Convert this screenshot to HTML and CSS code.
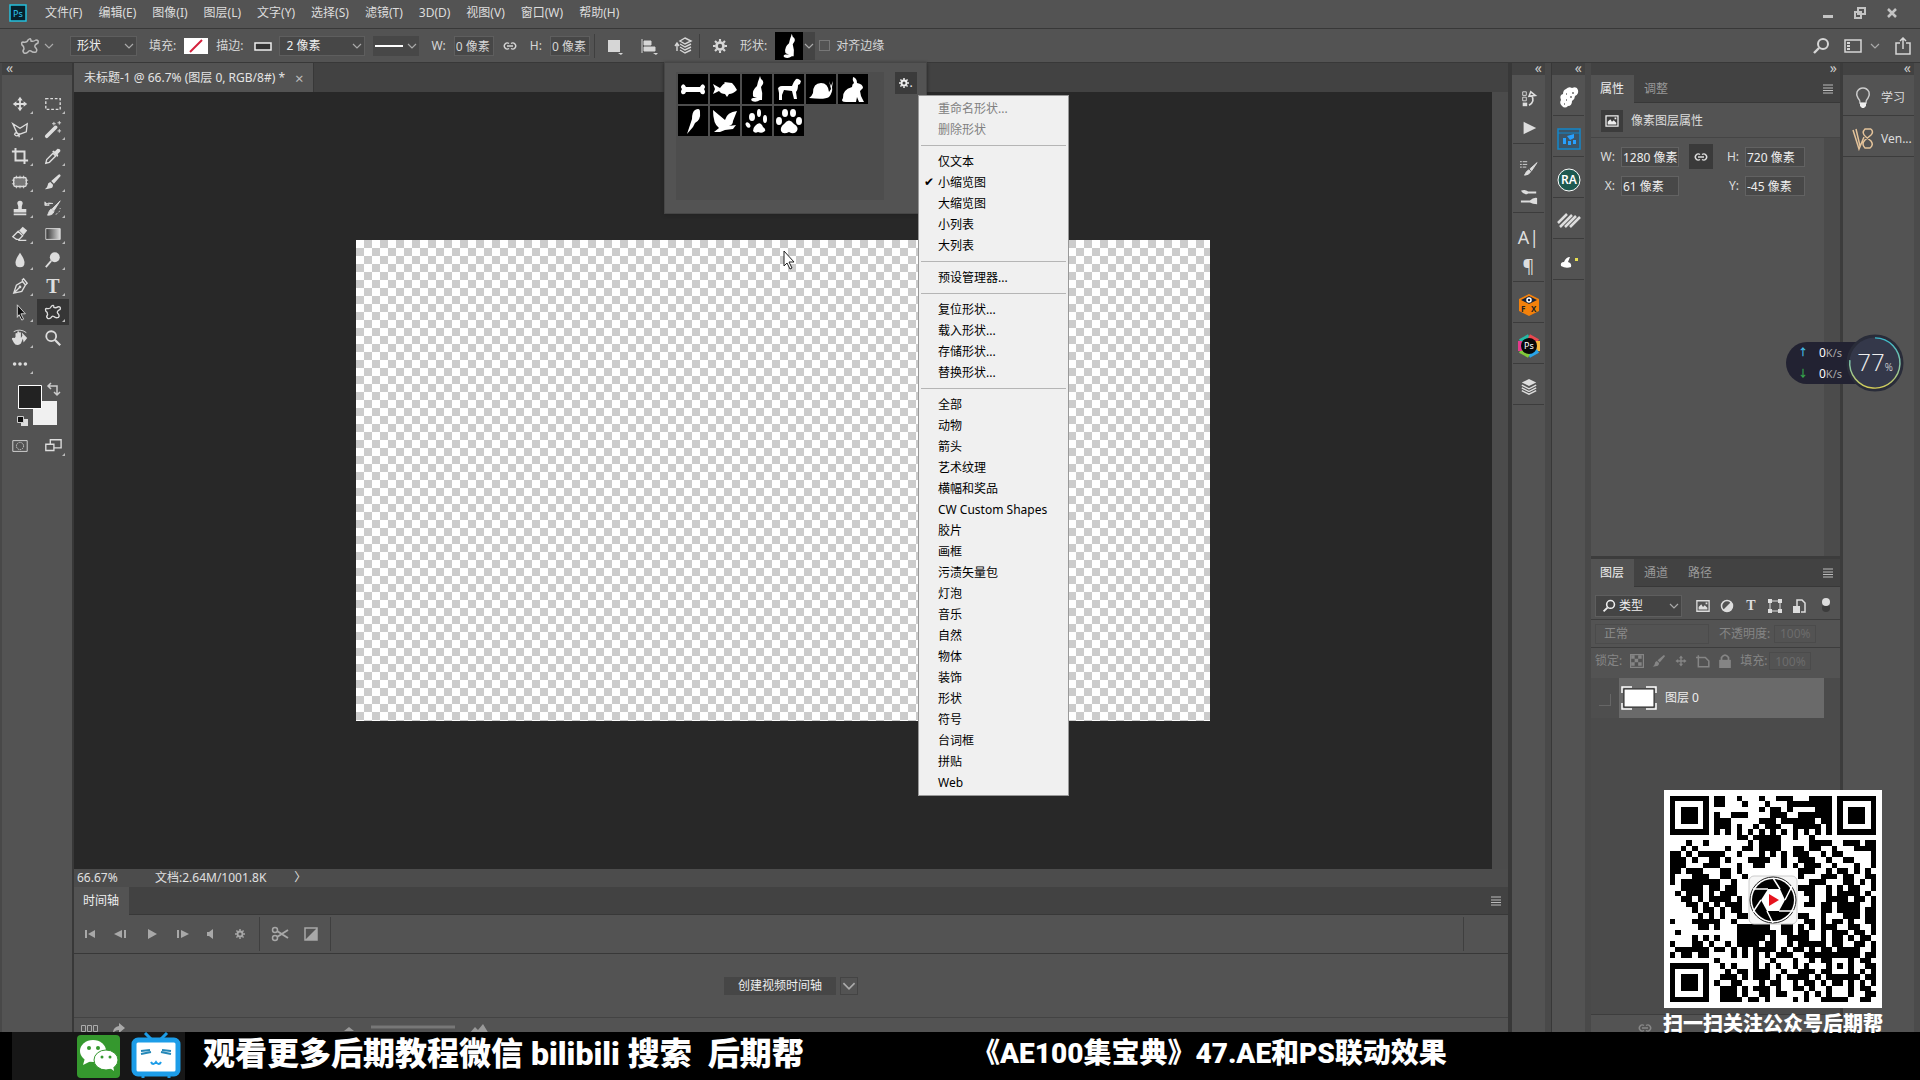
FILE: index.html
```html
<!DOCTYPE html>
<html lang="zh-CN">
<head>
  <meta charset="UTF-8">
  <meta name="viewport" content="width=device-width, initial-scale=1.0">
  <title>未标题-1 @ 66.7%</title>
  <link rel="stylesheet" href="styles.css">
</head>
<body>
  <!-- icons -->
  <svg class="defs" aria-hidden="true">
    <symbol id="i-star" viewBox="0 0 20 20"><path d="M8 4q3-3 3 1 2 1 5-1 3 0 2 3-4 2-3 4 3 3 1 5-3 1-5-1-2-1-3 1-2 2-4 1-2-2 0-4 0-3-2-4-1-3 1-3 4 1 5-2z" fill="none" stroke="currentColor" stroke-width="1.5"/></symbol>
    <symbol id="i-down" viewBox="0 0 10 10"><path d="M1 3l4 4 4-4" fill="none" stroke="#aaa" stroke-width="1.2"/></symbol>
    <symbol id="i-link" viewBox="0 0 16 10"><path d="M7 7.500a3 3 0 1 1 0-5M9 2.500a3 3 0 1 1 0 5M5 5h6" fill="none" stroke="currentColor" stroke-width="1.400"/></symbol>
    <symbol id="i-gear" viewBox="0 0 16 16"><circle cx="8" cy="8" r="4" fill="none" stroke="currentColor" stroke-width="3"/><path d="M8 0v3M8 13v3M0 8h3M13 8h3M2.300 2.300l2 2M11.700 11.700l2 2M13.700 2.300l-2 2M4.300 11.700l-2 2" stroke="currentColor" stroke-width="2.400"/></symbol>
    <symbol id="i-cat" viewBox="0 0 30 30"><path d="M18 2l1 3q3 2 2 5l-2 3q2 6 1 13h-2q-4 3-8 1-2-2 1-3h4q-4-1-4-2-1-6 4-10 1-5 2-7z" fill="#fff"/></symbol>
    <symbol id="i-search" viewBox="0 0 18 18"><circle cx="11" cy="7" r="5" fill="none" stroke="currentColor" stroke-width="2"/><path d="M7 11l-5 5" stroke="currentColor" stroke-width="2.400"/></symbol>
    <symbol id="i-brush" viewBox="0 0 20 20"><path d="M18 2q1 1 0 2l-7 8-3-3 8-7q1-1 2 0zM7 10l3 3q0 4-3 4-4 1-6 1 3-2 3-4 0-3 3-4z" fill="currentColor"/></symbol>
    <symbol id="i-move" viewBox="0 0 20 20"><path d="M10 2l3 4h-2v3h3V7l4 3-4 3v-2h-3v3h2l-3 4-3-4h2v-3H6v2l-4-3 4-3v2h3V6H7z" fill="currentColor"/></symbol>
    <symbol id="i-image" viewBox="0 0 16 14"><path d="M1 1h14v12H1z" fill="none" stroke="currentColor" stroke-width="1.500"/><path d="M3 11V8l3-3 2 3 2-2 3 3v2zM11 3h2v2h-2z" fill="currentColor"/></symbol>
    <symbol id="i-menu" viewBox="0 0 12 10"><path d="M1 1h10M1 4h10M1 6.500h10M1 9h10" stroke="currentColor"/></symbol>
  </svg>

  <div class="app">
    <header class="menubar">
      <svg class="ps-logo" viewBox="0 0 18 18"><rect x="1" y="1" width="16" height="16" fill="#06202c" stroke="#26c0dd" stroke-width="1.500"/><text x="4" y="13" font-size="9" fill="#31c5f0">Ps</text></svg>
      <nav>
        <a href="#">文件(F)</a><a href="#">编辑(E)</a><a href="#">图像(I)</a><a href="#">图层(L)</a><a href="#">文字(Y)</a><a href="#">选择(S)</a><a href="#">滤镜(T)</a><a href="#">3D(D)</a><a href="#">视图(V)</a><a href="#">窗口(W)</a><a href="#">帮助(H)</a>
      </nav>
      <div class="window-buttons">
        <button aria-label="最小化"><svg viewBox="0 0 12 12"><path d="M1 8h10v3H1z" fill="currentColor"/></svg></button>
        <button aria-label="还原"><svg viewBox="0 0 12 12"><path d="M4 1h7v6H4zM1 5h6v6H1z" fill="none" stroke="currentColor" stroke-width="2"/></svg></button>
        <button aria-label="关闭"><svg viewBox="0 0 12 12"><path d="M2 2l8 8M10 2l-8 8" stroke="currentColor" stroke-width="2.500"/></svg></button>
      </div>
    </header>

    <div class="options">
      <button class="tool-preset" aria-label="自定形状"><svg class="s20"><use href="#i-star"/></svg><svg class="s10"><use href="#i-down"/></svg></button>
      <span class="pick mode"><select aria-label="模式"><option>形状</option></select><svg class="s10"><use href="#i-down"/></svg></span>
      <span class="caption">填充:</span>
      <button class="swatch none" aria-label="填充"><svg viewBox="0 0 24 14"><path d="M6 13L18 1" stroke="#d4203c" stroke-width="2"/></svg></button>
      <span class="caption">描边:</span>
      <button class="swatch" aria-label="描边"><svg viewBox="0 0 24 14"><path d="M4 4h16v7H4z" fill="#333" stroke="#eee" stroke-width="1.500"/></svg></button>
      <span class="pick width"><input type="text" value="2 像素" aria-label="描边宽度"><svg class="s10"><use href="#i-down"/></svg></span>
      <button class="stroke-style" aria-label="描边类型"><i></i><svg class="s10"><use href="#i-down"/></svg></button>
      <label class="size">W:<input type="text" value="0 像素"></label>
      <svg class="link"><use href="#i-link"/></svg>
      <label class="size">H:<input type="text" value="0 像素"></label>
      <i class="bar"></i>
      <button class="opt" aria-label="路径操作"><svg viewBox="0 0 20 20"><path d="M3 4h12v12H3zM13 17h5l-2 2z" fill="currentColor"/></svg></button>
      <button class="opt" aria-label="对齐"><svg viewBox="0 0 20 20"><path d="M3 3v14M5 5h7v4H5zM5 11h11v4H5z" stroke="currentColor" fill="currentColor"/><path d="M14 17h5l-2 2z" fill="currentColor"/></svg></button>
      <button class="opt" aria-label="排列"><svg viewBox="0 0 20 20"><path d="M4 8v7M2 10l2-3 2 3M12 2l6 3-6 3-5-3zM7 8l5 3 6-3M7 11l5 3 6-3M7 14l5 3 6-3" stroke="currentColor" fill="none" stroke-width="1.400"/></svg></button>
      <i class="bar"></i>
      <button class="opt gear" aria-label="选项"><svg class="s14"><use href="#i-gear"/></svg></button>
      <span class="caption">形状:</span>
      <button class="shape-now" aria-label="当前形状"><svg><use href="#i-cat"/></svg></button>
      <button class="shape-arrow" aria-label="打开形状"><svg class="s10"><use href="#i-down"/></svg></button>
      <label class="check"><input type="checkbox">对齐边缘</label>
      <div class="options-right">
        <button aria-label="搜索"><svg class="s18"><use href="#i-search"/></svg></button>
        <button aria-label="工作区"><svg class="s18" viewBox="0 0 18 18"><path d="M1 3h16v12H1z" fill="none" stroke="currentColor" stroke-width="1.500"/><path d="M3 5h3v2H3zM3 8h3v2H3zM3 11h3v2H3z" fill="currentColor"/></svg><svg class="s10"><use href="#i-down"/></svg></button>
        <button aria-label="共享"><svg class="s18" viewBox="0 0 18 18"><path d="M6 6H2v11h14V6h-4M9 12V1M6 4l3-3 3 3" fill="none" stroke="currentColor" stroke-width="1.500"/></svg></button>
      </div>
    </div>

    <div class="work">
      <aside class="tools">
        <div class="strip left">«</div>
        <div class="tool-grid">
          <button aria-label="移动"><svg><use href="#i-move"/></svg></button>
          <button aria-label="矩形选框"><svg viewBox="0 0 20 20"><path d="M2 4h16v12H2z" fill="none" stroke="currentColor" stroke-width="1.500" stroke-dasharray="3 2"/></svg></button>
          <button aria-label="多边形套索"><svg viewBox="0 0 20 20"><path d="M7 14L2 3l8 5 8-5-1 9-8 3q-4-4-5 0 2 3 5 0v3" fill="none" stroke="currentColor" stroke-width="1.500"/></svg></button>
          <button aria-label="魔棒"><svg viewBox="0 0 20 20"><path d="M3 17L13 7" stroke="currentColor" stroke-width="4" stroke-linecap="round"/><path d="M11 1v4M9 3h4M17 0v4M15 2h4M17 9v4M15 11h4" stroke="currentColor"/></svg></button>
          <button aria-label="裁剪"><svg viewBox="0 0 20 20"><path d="M5 1v14h14M1 5h14v14" fill="none" stroke="currentColor" stroke-width="2.200"/></svg></button>
          <button aria-label="吸管"><svg viewBox="0 0 20 20"><path d="M2 18l1-4 7-7 3 3-7 7z" fill="none" stroke="currentColor" stroke-width="1.500"/><path d="M9 5l6 6 1-2-1-1 3-3q1-3-3-3l-3 3-1-1z" fill="currentColor"/></svg></button>
          <button aria-label="修补"><svg viewBox="0 0 20 20"><rect x="3" y="5" width="14" height="10" rx="2" fill="#777" stroke="currentColor" stroke-width="1.500"/><path d="M6 3v3M10 3v3M14 3v3M6 14v3M10 14v3M14 14v3M1 8h3M1 12h3M16 8h3M16 12h3" stroke="currentColor"/></svg></button>
          <button aria-label="画笔"><svg><use href="#i-brush"/></svg></button>
          <button aria-label="仿制图章"><svg viewBox="0 0 20 20"><path d="M10 2q3 0 3 3l-1 3v3h5v4H3v-4h5V8L7 5q0-3 3-3zM3 16h14v2H3z" fill="currentColor"/></svg></button>
          <button aria-label="历史记录画笔"><svg viewBox="0 0 20 20"><path d="M18 2L9 11l2 2zM8 11l3 3q-1 4-7 4 2-6 4-7zM1 7q4-4 9-2M1 3v4h5" fill="currentColor" stroke="currentColor"/><path d="M13 17q5-2 5-7" stroke="currentColor" stroke-dasharray="2 2" fill="none"/></svg></button>
          <button aria-label="橡皮擦"><svg viewBox="0 0 20 20"><path d="M9 6l4-4 5 4-4 5z" fill="currentColor"/><path d="M8 7l5 5-4 4H6l-4-3zM8 17h9" stroke="currentColor" stroke-width="1.500" fill="none"/></svg></button>
          <button aria-label="渐变"><svg viewBox="0 0 20 20"><defs><linearGradient id="gr"><stop stop-color="#333"/><stop offset="1" stop-color="#ddd"/></linearGradient></defs><path d="M2 4h16v12H2z" fill="url(#gr)" stroke="currentColor"/></svg></button>
          <button aria-label="模糊"><svg viewBox="0 0 20 20"><path d="M10 2q5 7 5 11 0 5-5 5t-5-5q0-4 5-11z" fill="currentColor"/></svg></button>
          <button aria-label="减淡"><svg viewBox="0 0 20 20"><circle cx="12" cy="7" r="5.500" fill="currentColor"/><path d="M8 11l-6 7" stroke="currentColor" stroke-width="2"/></svg></button>
          <button aria-label="钢笔"><svg viewBox="0 0 20 20"><path d="M3 18l3-9 7-4 3 4-4 7zM12 4l2-2 4 5-2 2M3 18l7-7" fill="none" stroke="currentColor" stroke-width="1.500"/><circle cx="10" cy="11" r="1.500" fill="currentColor"/></svg></button>
          <button class="type" aria-label="文字">T</button>
          <button aria-label="路径选择"><svg viewBox="0 0 20 20"><path d="M7 2l9 10h-5l3 6-2 1-3-6-2 3z" fill="#111" stroke="currentColor"/></svg></button>
          <button class="active" aria-label="自定形状"><svg><use href="#i-star"/></svg></button>
          <button aria-label="旋转视图"><svg viewBox="0 0 20 20"><path d="M5 9V5q1-1 2 0v4-6q1-1 2 0v6-5q1-1 2 0v6l2-3q2 0 1 2l-3 7q-5 4-8-1l-2-4q0-2 3-1zM12 4l6 6-4 5z" fill="currentColor"/><path d="M3 3q7-4 14 1" fill="none" stroke="currentColor"/></svg></button>
          <button class="plain" aria-label="缩放"><svg viewBox="0 0 20 20"><circle cx="8" cy="8" r="5.500" fill="none" stroke="currentColor" stroke-width="2"/><path d="M12 12l6 6" stroke="currentColor" stroke-width="2.500"/></svg></button>
          <button aria-label="更多"><svg viewBox="0 0 20 20"><circle cx="4" cy="10" r="2" fill="currentColor"/><circle cx="10" cy="10" r="2" fill="currentColor"/><circle cx="16" cy="10" r="2" fill="currentColor"/></svg></button>
        </div>
        <svg class="colours" viewBox="0 0 66 50"><path d="M31 21h24v24H31z" fill="#f0f0f0"/><path d="M16.500 5.500h23v23h-23z" fill="#222" stroke="#fff"/><path d="M46 6h9v9M49 3l-3 3 3 3M52 12l3 3 3-3" fill="none" stroke="#ccc" stroke-width="1.500"/><path d="M19 39h7v7h-7z" fill="#ddd"/><path d="M15.500 36.500h6v6h-6z" fill="#111" stroke="#ccc"/></svg>
        <div class="tool-grid">
          <button class="plain" aria-label="快速蒙版"><svg viewBox="0 0 20 20"><path d="M2 4h16v12H2z" fill="none" stroke="currentColor"/><circle cx="10" cy="10" r="4" fill="none" stroke="currentColor" stroke-dasharray="1.500 1"/></svg></button>
          <button aria-label="屏幕模式"><svg viewBox="0 0 20 20"><path d="M7 3h12v9H7z" fill="none" stroke="currentColor" stroke-width="1.500"/><path d="M2 8h9v7H2z" fill="#535353" stroke="currentColor" stroke-width="1.500"/></svg></button>
        </div>
      </aside>

      <main class="document">
        <div class="doc-tabs"><div class="doc-tab">未标题-1 @ 66.7% (图层 0, RGB/8#) *<button aria-label="关闭文档">×</button></div></div>
        <div class="stage"><div class="pasteboard"><div class="canvas"></div></div><div class="scroll"></div></div>
        <div class="status"><span class="zoom">66.67%</span><span>文档:2.64M/1001.8K</span><span class="next">〉</span></div>
        <section class="timeline">
          <div class="tabs"><button class="tab on">时间轴</button><button class="panel-menu" aria-label="面板菜单"><svg><use href="#i-menu"/></svg></button></div>
          <div class="transport">
            <button aria-label="转到第一帧"><svg viewBox="0 0 14 14"><path d="M2 3h2v8H2zM12 3v8L5 7z" fill="currentColor"/></svg></button>
            <button aria-label="上一帧"><svg viewBox="0 0 14 14"><path d="M8 3v8L0 7zM10 3h2v8h-2z" fill="currentColor"/></svg></button>
            <button aria-label="播放"><svg viewBox="0 0 14 14"><path d="M3 2l9 5-9 5z" fill="currentColor"/></svg></button>
            <button aria-label="下一帧"><svg viewBox="0 0 14 14"><path d="M1 3h2v8H1zM5 3l8 4-8 4z" fill="currentColor"/></svg></button>
            <button class="narrow" aria-label="静音"><svg viewBox="0 0 14 14"><path d="M3 5h2l4-3v10L5 9H3z" fill="currentColor"/></svg></button>
            <button class="cog" aria-label="设置"><svg><use href="#i-gear"/></svg></button>
            <i class="bar"></i>
            <button aria-label="拆分"><svg class="s18" viewBox="0 0 18 18"><path d="M6 6l11 7M6 12l11-7" stroke="currentColor" stroke-width="2"/><circle cx="4" cy="5" r="2.500" fill="none" stroke="currentColor" stroke-width="1.500"/><circle cx="4" cy="13" r="2.500" fill="none" stroke="currentColor" stroke-width="1.500"/></svg></button>
            <button aria-label="过渡"><svg viewBox="0 0 14 14"><path d="M1 1h12v12H1z" fill="none" stroke="currentColor" stroke-width="1.500"/><path d="M13 1v12H1z" fill="currentColor"/></svg></button>
            <i class="bar"></i>
            <i class="bar last"></i>
          </div>
          <div class="timeline-body"><button class="create">创建视频时间轴</button><button class="create-more" aria-label="更多"><svg class="s14"><use href="#i-down"/></svg></button></div>
          <div class="timeline-foot">
            <svg viewBox="0 0 360 14"><path d="M2.500 3.500h4v6h-4zM8.500 3.500h4v6h-4zM14.500 3.500h4v6h-4z" fill="none" stroke="#aaa"/><path d="M34 11q0-6 6-7V1l6 5-6 5V8q-4 0-6 3z" fill="#aaa"/><path d="M265 9l5-4 5 4z" fill="#999"/><path d="M292 5h84" stroke="#777" stroke-width="3"/></svg>
            <svg class="mountain" viewBox="0 0 20 14"><path d="M0 12l6-7 3 3 5-6 6 10z" fill="#999"/></svg>
          </div>
        </section>
      </main>

      <aside class="dock">
        <div class="strip">«</div>
        <div class="group">
          <button aria-label="历史记录"><svg viewBox="0 0 20 20"><path d="M3 2h4v4H3zM3 8h4v4H3z" fill="none" stroke="currentColor"/><path d="M3 14h5v4H3z" fill="currentColor"/><path d="M10 17q7-4 3-11M10 7l2-5 5 4z" fill="none" stroke="currentColor" stroke-width="1.800"/></svg></button>
          <button aria-label="动作"><svg viewBox="0 0 20 20"><path d="M4 3l14 7-14 7z" fill="currentColor"/></svg></button>
        </div>
        <div class="group">
          <button aria-label="画笔设置"><svg viewBox="0 0 20 20"><path d="M0 3h2M0 6h2M0 9h2M3 3h5M3 6h5M3 9h4" stroke="currentColor"/><path d="M19 4l-8 7 2 2zM10 12l2 2q-2 4-7 4 2-5 5-6z" fill="currentColor" stroke="currentColor"/></svg></button>
          <button aria-label="画笔"><svg viewBox="0 0 20 20"><path d="M1 3q5-2 8 1h9v2H9q-4 3-8-3zM1 14h10q4-4 8-3v7q-5 0-8-2H1z" fill="currentColor"/></svg></button>
        </div>
        <div class="group">
          <button class="glyph" aria-label="字符">A|</button>
          <button class="glyph" aria-label="段落">¶</button>
        </div>
        <div class="group one"><button aria-label="FX"><svg class="s24" viewBox="0 0 24 24"><path d="M12 1l10 5v12l-10 5-10-5V6z" fill="#f4810b"/><path d="M4 7l8-4 8 4-8 4z" fill="#16233a"/><circle cx="12" cy="7" r="2" fill="#16233a" stroke="#fff" stroke-width="1.500"/><text x="4" y="19" font-size="8" font-weight="700" fill="#222">F</text><text x="14" y="19" font-size="8" font-weight="700" fill="#222">X</text></svg></button></div>
        <div class="group one"><button aria-label="Ps 插件"><svg class="s24" viewBox="0 0 24 24"><g fill="none" stroke-width="4"><path d="M3 7l9-5" stroke="#25b9a5"/><path d="M12 2l9 5" stroke="#e8484f"/><path d="M21 7v10" stroke="#f5b73b"/><path d="M21 17l-9 5" stroke="#29a4e8"/><path d="M12 22l-9-5" stroke="#82c83a"/><path d="M3 17V7" stroke="#e43a8c"/></g><circle cx="12" cy="12" r="8" fill="#080808"/><text x="7" y="15" font-size="9" fill="#fff">Ps</text></svg></button></div>
        <div class="group one"><button aria-label="图层"><svg viewBox="0 0 20 20"><path d="M10 1l8 4-8 4-8-4z" fill="currentColor"/><path d="M2 8l8 4 8-4M2 11l8 4 8-4M2 14l8 4 8-4" fill="none" stroke="currentColor" stroke-width="1.500"/></svg></button></div>
      </aside>

      <aside class="dock">
        <div class="strip">«</div>
        <div class="group one"><button aria-label="插件"><svg class="s24" viewBox="0 0 24 24"><path d="M9 3q3-3 6-1 5-2 6 2 1 4-3 6 0 3-3 5 0 5-4 5-3 3-6 0-3-3-1-6-2-5 2-6 0-4 3-5z" fill="#fff"/><path d="M9 8h1M15 7h2M9 14h1M7 18h1M13 11h2" stroke="#222"/></svg></button></div>
        <div class="group one"><button aria-label="插件"><svg class="s24" viewBox="0 0 24 24"><path d="M1 2h22v20H1z" fill="#3b5568" stroke="#1587c9" stroke-width="1.500"/><path d="M1 6h22" stroke="#1587c9"/><path d="M6 11h3v6H6zM10 9l7-2v4l-4 2zM11 14h3v4h-3zM16 13h3v4h-3z" fill="#27a0ff"/></svg></button></div>
        <div class="group one"><button aria-label="RA"><svg class="s24" viewBox="0 0 24 24"><circle cx="12" cy="12" r="11" fill="#1d5a50" stroke="#fff"/><text x="4" y="16" font-size="12" font-weight="600" fill="#fff">RA</text></svg></button></div>
        <div class="group one"><button aria-label="插件"><svg class="s24" viewBox="0 0 24 24"><path d="M1 14l9-9M3 18L15 6M8 18L19 7M13 18L23 8" stroke="#ddd" stroke-width="2.500"/></svg></button></div>
        <div class="group one"><button aria-label="插件"><svg class="s24" viewBox="0 0 24 24"><path d="M4 16q-1-4 3-4 2-5 6-5l-2 5q4 1 3 5-5 2-10-1z" fill="#fff"/><path d="M18 8h3v3h-3z" fill="#e8df50"/></svg></button></div>
      </aside>

      <aside class="panels">
        <div class="strip">»</div>
        <section class="properties">
          <div class="tabs"><button class="tab on">属性</button><button class="tab">调整</button><button class="panel-menu" aria-label="面板菜单"><svg><use href="#i-menu"/></svg></button></div>
          <div class="prop-title"><span class="thumb-icon"><svg><use href="#i-image"/></svg></span>像素图层属性</div>
          <div class="prop-body">
            <div class="fields">
              <label for="pw">W:</label><input id="pw" type="text" value="1280 像素"><button class="chain" aria-label="链接"><svg class="link"><use href="#i-link"/></svg></button><label for="ph">H:</label><input id="ph" type="text" value="720 像素">
              <label for="px">X:</label><input id="px" type="text" value="61 像素"><span></span><label for="py">Y:</label><input id="py" type="text" value="-45 像素">
            </div>
            <div class="scroll"></div>
          </div>
        </section>
        <section class="layers">
          <div class="tabs"><button class="tab on">图层</button><button class="tab">通道</button><button class="tab">路径</button><button class="panel-menu" aria-label="面板菜单"><svg><use href="#i-menu"/></svg></button></div>
          <div class="row filter">
            <span class="pick kind"><svg class="s12"><use href="#i-search"/></svg><select aria-label="类型"><option>类型</option></select><svg class="s10"><use href="#i-down"/></svg></span>
            <svg class="s12" viewBox="0 0 16 14"><use href="#i-image"/></svg>
            <svg class="s12" viewBox="0 0 14 14"><circle cx="7" cy="7" r="5.500" fill="none" stroke="currentColor" stroke-width="1.500"/><path d="M11 3a5.500 5.500 0 0 1-8 8z" fill="currentColor"/></svg>
            <b class="t">T</b>
            <svg class="s12" viewBox="0 0 14 14"><path d="M2 2h10v10H2z" fill="none" stroke="currentColor"/><path d="M0 0h4v4H0zM10 0h4v4h-4zM0 10h4v4H0zM10 10h4v4h-4z" fill="currentColor"/></svg>
            <svg class="s12" viewBox="0 0 14 14"><path d="M5 7V1h5l3 3v9H9" fill="none" stroke="currentColor" stroke-width="1.500"/><path d="M1 7h7v7H1z" fill="currentColor"/></svg>
            <i class="toggle"></i>
          </div>
          <div class="row blend"><select aria-label="混合模式" disabled><option>正常</option></select><label for="op">不透明度:</label><input id="op" value="100%" disabled></div>
          <div class="row lock">
            <span>锁定:</span>
            <svg class="s12" viewBox="0 0 12 12"><path d="M.5.500h11v11H.500z" fill="none" stroke="currentColor"/><path d="M1 1h3v3H1zM7 1h3v3H7zM4 4h3v3H4zM1 7h3v3H1zM7 7h3v3H7z" fill="currentColor"/></svg>
            <svg class="s12"><use href="#i-brush"/></svg>
            <svg class="s12"><use href="#i-move"/></svg>
            <svg class="s12" viewBox="0 0 12 12"><path d="M0 3h8l3 3v5H2V1" fill="none" stroke="currentColor" stroke-width="1.300"/></svg>
            <svg class="s12" viewBox="0 0 12 12"><path d="M1 5h10v7H1z" fill="currentColor"/><path d="M3 6V3q3-4 6 0v3" fill="none" stroke="currentColor" stroke-width="1.500"/></svg>
            <label for="fill">填充:</label><input id="fill" value="100%" disabled>
          </div>
          <div class="layer-list">
            <div class="eye"><i></i></div>
            <div class="layer"><svg viewBox="0 0 36 24"><path d="M3 3h30v18H3z" fill="#fff" stroke="#222"/><path d="M1 7V1h10M25 1h10v6M35 17v6H25M11 23H1v-6" fill="none" stroke="#fff" stroke-width="1.500"/></svg>图层 0</div>
            <div class="scroll"></div>
          </div>
          <div class="layer-foot"><svg class="link"><use href="#i-link"/></svg></div>
        </section>
      </aside>

      <aside class="learn">
        <div class="strip">«</div>
        <button><svg class="s24" viewBox="0 0 24 24"><path d="M9 17q0-3-2-5-2-3-1-6 2-4 6-4t6 4q1 3-1 6-2 2-2 5z" fill="none" stroke="#ccc" stroke-width="1.500"/><path d="M9 17h6v3l-2 2h-2l-2-2z" fill="#eee"/></svg>学习</button>
        <button><svg class="s24" viewBox="0 0 24 24"><path d="M2 3l6 19 5-12M5 2l4 17M20 2h-6q-4 4 1 8l5 4q3 4-1 7h-5q-4-4 0-8l6-5q3-3 0-6" fill="none" stroke="#e4c39a" stroke-width="1.500"/></svg>Ven...</button>
      </aside>
    </div>

    <footer class="banner">
      <div class="logos">
        <svg viewBox="0 0 44 44"><rect width="43" height="43" x="1" y="1" rx="4" fill="#35982e"/><ellipse cx="17" cy="17" rx="13" ry="11" fill="#fff"/><path d="M9 24l-2 7 8-4z" fill="#fff"/><ellipse cx="30" cy="26" rx="12" ry="10" fill="#fff" stroke="#35982e"/><path d="M34 34l4 3-1-6z" fill="#fff"/><g fill="#35982e"><circle cx="13" cy="14" r="2"/><circle cx="22" cy="14" r="2"/><circle cx="26" cy="23" r="1.500"/><circle cx="34" cy="23" r="1.500"/></g></svg>
        <svg class="tv" viewBox="0 0 50 48"><path d="M14 1l7 7M36 1l-7 7M12 43v3M38 43v3" stroke="#1d9de8" stroke-width="3"/><rect x="3" y="8" width="44" height="34" rx="4" fill="#fff" stroke="#1d9de8" stroke-width="5"/><path d="M10 22l10-2M30 20l10 2M10 19l9-1M31 18l9 1" stroke="#2588b8" stroke-width="2"/><path d="M20 30q2 4 5 0 3 4 5 0" fill="none" stroke="#1d9de8" stroke-width="2"/></svg>
      </div>
      <p class="promo">观看更多后期教程微信 bilibili 搜索&nbsp; 后期帮</p>
      <p class="episode">《AE100集宝典》47.AE和PS联动效果</p>
    </footer>
  </div>

  <!-- shape picker -->
  <div class="picker">
    <div class="shapes">
      <button aria-label="骨头"><svg viewBox="0 0 30 30"><path d="M4 11q2-2 4 2h14q2-4 4-2 2 2 0 4 2 3 0 5-3 1-4-2H8q-1 3-4 2-2-2 0-5-2-2 0-4z" fill="#fff"/></svg></button>
      <button aria-label="鱼"><svg viewBox="0 0 30 30"><path d="M3 10l7 4q3-4 5-5l-1-1 8 1q3 3 5 7-4 4-8 4l-2 3-2-3q-4 0-6-3l-6 3 2-5z" fill="#fff"/></svg></button>
      <button aria-label="猫"><svg><use href="#i-cat"/></svg></button>
      <button aria-label="狗"><svg viewBox="0 0 30 30"><path d="M3 17q1-5 5-5h10q2-5 4-7 2-1 5 2l-1 3-2 1q0 5-2 7l1 7h-3l-2-8-8-1-2 5v5H5v-7l-1-5z" fill="#fff"/></svg></button>
      <button aria-label="蜗牛"><svg viewBox="0 0 30 30"><path d="M3 24q3-2 4-5 0-10 8-10 7 0 8 9l2-3-2-8 2 5 2-5-1 6q1 5-3 10-4 3-20 1z" fill="#fff"/></svg></button>
      <button aria-label="兔"><svg viewBox="0 0 30 30"><path d="M15 3q4 1 4 6 6 1 6 5l-3 3 1 5 3 6h-5l-2-5-1 5H8q-6 0-3-4-1-8 9-11 0-3 2-4-2-3-1-6z" fill="#fff"/></svg></button>
      <button aria-label="鹦鹉"><svg viewBox="0 0 30 30"><path d="M17 4q5-3 5 2 1 8-5 11l-2 4-6 7 5-15q0-7 3-9z" fill="#fff"/></svg></button>
      <button aria-label="飞鸟"><svg viewBox="0 0 30 30"><path d="M3 4l12 10q2-8 12-9l-4 10q0 4-4 5l7-1-3 4-8 1-5 2H4l5-4q-6-4-6-18z" fill="#fff"/></svg></button>
      <button aria-label="爪印"><svg viewBox="0 0 30 30"><g fill="#fff"><path d="M13 20q5-6 8 1 3 2 2 4-3 3-7 1-3 2-5-1 0-3 2-5z"/><ellipse cx="6" cy="19" rx="2" ry="3" transform="rotate(-35 6 19)"/><ellipse cx="10" cy="11" rx="3" ry="4"/><ellipse cx="17" cy="7" rx="2" ry="4"/><ellipse cx="23" cy="13" rx="2" ry="4"/></g></svg></button>
      <button aria-label="爪印"><svg viewBox="0 0 30 30"><g fill="#fff"><path d="M10 18q5-7 10 0 5 3 3 7-3 4-8 1-6 3-8-1-1-4 3-7z"/><ellipse cx="5" cy="15" rx="3" ry="4"/><ellipse cx="11" cy="7" rx="3" ry="4"/><ellipse cx="19" cy="7" rx="3" ry="4"/><ellipse cx="25" cy="15" rx="3" ry="4"/></g></svg></button>
    </div>
    <button class="picker-gear" aria-label="形状菜单"><svg class="s10"><use href="#i-gear"/></svg>.</button>
  </div>

  <ul class="context-menu">
    <li class="off">重命名形状...</li><li class="off">删除形状</li>
    <li class="sep"></li>
    <li>仅文本</li><li class="checked">小缩览图</li><li>大缩览图</li><li>小列表</li><li>大列表</li>
    <li class="sep"></li>
    <li>预设管理器...</li>
    <li class="sep"></li>
    <li>复位形状...</li><li>载入形状...</li><li>存储形状...</li><li>替换形状...</li>
    <li class="sep"></li>
    <li>全部</li><li>动物</li><li>箭头</li><li>艺术纹理</li><li>横幅和奖品</li><li>CW Custom Shapes</li><li>胶片</li><li>画框</li><li>污渍矢量包</li><li>灯泡</li><li>音乐</li><li>自然</li><li>物体</li><li>装饰</li><li>形状</li><li>符号</li><li>台词框</li><li>拼贴</li><li>Web</li>
  </ul>

  <svg class="cursor" viewBox="0 0 12 20"><path d="M1 1v15l3-3 3 6 2-1-3-6h5z" fill="#fff" stroke="#222"/></svg>

  <div class="net">
    <div class="rates">
      <div><b class="up">↑</b><span>0<small>K/s</small></span></div>
      <div><b class="dn">↓</b><span>0<small>K/s</small></span></div>
    </div>
    <div class="gauge">
      <svg viewBox="0 0 60 60"><defs><linearGradient id="ring" x2="0" y2="1"><stop stop-color="#38b8cc"/><stop offset=".6" stop-color="#8fc9a0"/><stop offset="1" stop-color="#d4cb55"/></linearGradient></defs><circle cx="30" cy="30" r="28" fill="#34384a" stroke="#292c39" stroke-width="3"/><path d="M30 4a26 26 0 1 1-26 23" fill="none" stroke="url(#ring)" stroke-width="1.500"/></svg>
      <span>77<small>%</small></span>
    </div>
  </div>

  <div class="qr">
    <svg id="qr" viewBox="-1 -1 39 39" shape-rendering="crispEdges"></svg>
    <svg class="qr-logo" viewBox="0 0 50 50"><rect x="1" y="1" width="48" height="48" rx="5" fill="#f6f6f6" stroke="#ccc"/><circle cx="25" cy="25" r="23" fill="#fff" stroke="#222"/><circle cx="25" cy="25" r="21" fill="#000"/><path d="M20 14h12l5 11-6 11H19l-6-11z" fill="#fff"/><path d="M32 14L25 3M37 25l7-14M31 36h15M19 36l6 12M13 25L5 37M20 14H5" stroke="#fff" stroke-width="1.500"/><path d="M21 19l10 6-10 6z" fill="#e5131d"/></svg>
    <p>扫一扫关注公众号后期帮</p>
  </div>

  <script src="qr.js"></script>
</body>
</html>
```

FILE: styles.css
```css
* { box-sizing: border-box; }
body {
  margin: 0;
  background: #535353;
  color: #ddd;
  font: 12px/16px "Noto Sans", "Noto Sans CJK SC", sans-serif;
  overflow: hidden;
}
button, input, select {
  font: inherit;
  color: inherit;
  background: none;
  border: 0;
  padding: 0;
  margin: 0;
  border-radius: 0;
  appearance: none;
}
button { display: flex; align-items: center; justify-content: center; }
a { color: inherit; text-decoration: none; }
p, ul { margin: 0; padding: 0; }
svg { display: block; flex: none; }
.defs { position: absolute; width: 0; height: 0; }
.s10 { width: 10px; height: 10px; }
.s12 { width: 14px; height: 14px; }
.s14 { width: 14px; height: 14px; }
.s18 { width: 18px; height: 18px; }
.s20 { width: 20px; height: 20px; }
.s24 { width: 24px; height: 24px; }

.app { height: 100vh; display: flex; flex-direction: column; }

/* menu */
.menubar {
  height: 29px;
  display: flex;
  align-items: center;
  padding: 0 20px 3px 9px;
  border-bottom: 1px solid #383838;
}
.ps-logo { width: 18px; height: 18px; margin-right: 16px; }
.menubar nav { display: flex; gap: 16px; padding-left: 2px; }
.window-buttons { margin-left: auto; display: flex; gap: 16px; color: #c4c4c4; }
.window-buttons button { width: 16px; }
.window-buttons svg { width: 12px; height: 12px; }

/* options */
.options {
  height: 34px;
  display: flex;
  align-items: center;
  gap: 8px;
  padding: 0 8px 0 20px;
  border-bottom: 1px solid #383838;
  color: #d6d6d6;
}
.tool-preset { gap: 4px; color: #bbb; margin-right: 8px; }
.pick { display: flex; align-items: center; height: 20px; background: #474747; border: 1px solid #5e5e5e; padding: 0 2px 0 6px; color: #eee; }
.pick select, .pick input { flex: 1; min-width: 0; }
.mode { width: 67px; margin-right: 4px; }
.width { width: 86px; margin-left: -4px; }
.swatch { width: 24px; height: 16px; }
.swatch.none { background: #fff; }
.swatch svg { width: 24px; height: 14px; }
.stroke-style { width: 46px; gap: 4px; height: 20px; background: #474747; }
.stroke-style i { width: 28px; height: 2px; background: #fff; }
.size { display: flex; align-items: center; gap: 8px; padding-left: 4px; }
.size input { width: 40px; height: 20px; background: #474747; border: 1px solid #5e5e5e; padding-left: 1px; }
.link { width: 16px; height: 10px; }
.bar { width: 1px; height: 24px; background: #3f3f3f; flex: none; }
.options .bar { margin-left: -4px; }
.opt { width: 24px; }
.opt svg { width: 20px; height: 20px; }
.opt + .opt { margin-left: 2px; }
.opt.gear svg { width: 14px; height: 14px; }
.shape-now { width: 28px; height: 28px; background: #000; }
.shape-now svg { width: 28px; height: 28px; }
.shape-arrow { width: 12px; height: 28px; background: #444; margin-left: -8px; }
.check { display: flex; align-items: center; gap: 6px; margin-left: -4px; }
.check input { width: 11px; height: 11px; border: 1px solid #777; }
.options-right { margin-left: auto; display: flex; gap: 14px; }
.options-right button { gap: 8px; }

.work { flex: 1; min-height: 0; display: flex; }
.strip { height: 12px; background: #424242; text-align: right; line-height: 10px; padding-right: 3px; color: #ccc; font-size: 14px; flex: none; }
.strip.left { text-align: left; padding-left: 4px; }

/* tools */
.tools { width: 74px; border-right: 2px solid #383838; border-left: 2px solid #484848; }
.tool-grid { display: grid; grid-template-columns: 34px 32px; grid-auto-rows: 26px; padding: 0 1px; color: #ddd; }
.strip + .tool-grid { padding-top: 16px; }
.tool-grid button { position: relative; }
.tool-grid svg { width: 18px; height: 18px; }
.tool-grid button::after {
  content: "";
  position: absolute;
  right: 4px;
  bottom: 3px;
  border-left: 3px solid transparent;
  border-bottom: 3px solid #bbb;
}
.tool-grid .plain::after { display: none; }
.tool-grid .active { background: #363636; }
.tool-grid .type { font: bold 20px/20px "Liberation Serif", serif; }
.colours { width: 66px; height: 50px; margin: 3px 0; }

/* document */
.document { flex: 1; min-width: 0; display: flex; flex-direction: column; border-right: 3px solid #383838; }
.doc-tabs { height: 29px; background: #424242; display: flex; flex: none; }
.doc-tab { display: flex; align-items: center; background: #535353; padding: 0 9px 0 10px; gap: 10px; color: #e4e4e4; border-right: 1px solid #383838; }
.doc-tab button { font-size: 15px; color: #bbb; }
.stage { flex: 1; min-height: 0; display: flex; }
.scroll { width: 16px; background: #4b4b4b; }
.pasteboard { flex: 1; background: #282828; display: flex; align-items: center; justify-content: center; }
.canvas { width: 60.25%; aspect-ratio: 854 / 480; background: repeating-conic-gradient(#ccc 0 25%, #fff 0 50%) 0 0 / 16px 16px; }
.status { height: 18px; flex: none; display: flex; align-items: center; padding-left: 3px; background: #4c4c4c; color: #e0e0e0; }
.status .zoom { width: 78px; }
.status .next { margin-left: 28px; }

.tabs { height: 28px; display: flex; background: #424242; border-bottom: 1px solid #383838; flex: none; }
.tab { padding: 0 10px; color: #999; }
.tab.on { background: #535353; color: #eee; margin-bottom: -1px; padding-left: 9px; }
.panel-menu { margin-left: auto; padding: 0 6px; color: #bbb; }
.panel-menu svg { width: 12px; height: 10px; }
.timeline { height: 145px; flex: none; overflow: hidden; }
.transport { height: 39px; display: flex; align-items: center; border-bottom: 1px solid #383838; color: #a8a8a8; }
.transport button { width: 31px; }
.transport .narrow { width: 26px; }
.transport svg { width: 14px; height: 14px; }
.transport .s18 { width: 18px; height: 18px; }
.transport .cog svg { width: 10px; height: 10px; }
.transport .bar { height: 34px; margin: 0 4px; }
.transport .last { margin: 0 44px 0 auto; }
.timeline-body { height: 64px; display: flex; align-items: center; justify-content: center; gap: 4px; border-bottom: 1px solid #434343; color: #eee; }
.create { width: 112px; height: 18px; background: #464646; }
.create-more { width: 18px; height: 18px; border: 1px solid #444; color: #bbb; }
.timeline-foot { height: 14px; display: flex; padding: 4px 6px 0 5px; }
.timeline-foot svg { width: 360px; height: 14px; overflow: visible; }
.timeline-foot .mountain { width: 20px; margin-left: 30px; }

/* icon docks */
.dock { width: 40px; border-right: 6px solid #494949; border-left: 1px solid #383838; color: #ddd; background: #535353; }
.group { padding-top: 8px; border-bottom: 1px solid #3c3c3c; margin: 0 1px; display: grid; grid-auto-rows: 29px; height: 69px; align-content: center; }
.group.one { height: 41px; padding-top: 6px; }
.group svg { width: 18px; height: 18px; }
.group .s24 { width: 24px; height: 24px; }
.glyph { font-size: 18px; }

/* panels */
.panels { width: 252px; display: flex; flex-direction: column; border-right: 3px solid #3c3c3c; }
.properties { height: 481px; flex: none; display: flex; flex-direction: column; }
.prop-title { height: 35px; flex: none; display: flex; align-items: center; gap: 8px; padding: 2px 0 0 10px; border-bottom: 1px solid #454545; }
.thumb-icon { width: 22px; height: 22px; background: #3c3c3c; display: grid; place-items: center; color: #eee; }
.thumb-icon svg { width: 14px; height: 12px; }
.prop-body { flex: 1; display: flex; justify-content: space-between; }
.fields { display: grid; grid-template-columns: 22px 58px 32px 16px 60px; column-gap: 6px; grid-auto-rows: 29px; align-items: center; padding: 4px 0 0 2px; align-content: start; }
.fields label { text-align: right; }
.fields input { height: 20px; width: 100%; background: #484848; border: 1px solid #626262; padding-left: 1px; color: #eee; }
.chain { width: 24px; height: 25px; background: #3a3a3a; justify-self: center; }
.layers { flex: 1; min-height: 0; display: flex; flex-direction: column; border-top: 3px solid #3c3c3c; }
.row { display: flex; align-items: center; height: 28px; flex: none; border-bottom: 1px solid #3d3d3d; gap: 10px; padding: 0 10px 0 4px; }
.filter { height: 33px; padding-top: 6px; }
.kind { width: 87px; height: 22px; margin-right: 4px; gap: 3px; background: #444; }
.filter .t { font: bold 14px/14px "Liberation Serif", serif; width: 14px; text-align: center; }
.toggle { width: 8px; height: 8px; border-radius: 4px; background: #ddd; box-shadow: 0 6px 0 #3c3c3c; margin: -8px 0 0 auto; }
.blend, .lock { color: #858585; }
.blend select { width: 114px; height: 20px; border: 1px solid #4b4b4b; padding-left: 8px; color: #8b8b8b; opacity: 1; }
.row input { width: 42px; height: 18px; border: 1px solid #4b4b4b; color: #6c6c6c; text-align: center; margin-left: -6px; }
.blend input { margin-right: auto; }
.lock { height: 30px; gap: 8px; border: 0; padding-bottom: 4px; }
.layer-list { flex: 1; background: #4b4b4b; display: flex; align-items: flex-start; }
.eye { width: 28px; height: 40px; background: #4e4e4e; padding: 16px 8px; }
.eye i { display: block; height: 12px; border-right: 1px solid #666; border-bottom: 1px solid #666; }
.layer { flex: 1; height: 40px; background: #6a6a6a; display: flex; align-items: center; gap: 8px; padding-left: 2px; color: #eee; }
.layer svg { width: 36px; height: 24px; }
.layer-foot { height: 18px; flex: none; border-top: 1px solid #3d3d3d; padding: 8px 0 0 46px; color: #888; }
.learn { width: 77px; border-right: 6px solid #4b4b4b; }
.learn button { width: 100%; height: 41px; justify-content: flex-start; gap: 6px; padding: 6px 0 0 8px; border-bottom: 1px solid #3c3c3c; }

/* banner */
.banner { height: 48px; flex: none; background: #000; display: flex; align-items: center; padding-left: 12px; color: #fff; }
.logos { width: 173px; height: 48px; background: #171717; display: flex; align-items: center; gap: 11px; padding-left: 64px; }
.logos svg { width: 44px; height: 44px; }
.logos .tv { width: 50px; height: 48px; }
.promo, .episode { line-height: 44px; height: 48px; font-weight: 900; font-family: Roboto, "Noto Sans CJK SC", sans-serif; white-space: nowrap; }
.promo { font-size: 32px; padding-left: 18px; }
.episode { font-size: 28px; position: absolute; left: 972px; }

/* overlays */
.picker { position: absolute; left: 664px; top: 62px; width: 263px; height: 152px; background: #535353; border: 1px solid #464646; box-shadow: 0 1px 3px #222; padding: 9px; display: flex; justify-content: space-between; padding-left: 11px; }
.shapes { width: 208px; height: 128px; background: #4d4d4d; display: grid; grid-template-columns: repeat(6, 30px); grid-auto-rows: 30px; gap: 2px; padding: 2px; align-content: start; }
.shapes button { background: #000; }
.shapes svg { width: 30px; height: 30px; }
.picker-gear { width: 22px; height: 22px; background: #3b3b3b; color: #eee; }
.context-menu { position: absolute; left: 918px; top: 95px; width: 151px; background: #f0f0f0; color: #000; border: 1px solid #999; padding: 2px 1px; list-style: none; }
.context-menu li { height: 21px; line-height: 21px; padding-left: 18px; position: relative; white-space: nowrap; }
.context-menu .off { color: #808080; }
.context-menu .sep { height: 11px; border: solid #f0f0f0; border-width: 5px 1px; background: #b5b5b5; }
.context-menu .checked::before { content: "✔"; position: absolute; left: 4px; font-family: "DejaVu Sans", sans-serif; }
.cursor { position: absolute; left: 783px; top: 250px; width: 12px; height: 20px; }

.net { position: absolute; right: 16px; top: 334px; display: flex; align-items: center; }
.rates { width: 86px; height: 42px; margin-right: -26px; border-radius: 21px 0 0 21px; background: #222232; padding: 0 30px 0 12px; }
.rates div { display: flex; justify-content: space-between; line-height: 21px; color: #fff; }
.rates b { font-size: 10px; }
.rates .up { color: #45bce4; }
.rates .dn { color: #35a54b; }
.rates small { font-size: 11px; color: #aaa; }
.gauge { position: relative; width: 58px; height: 58px; }
.gauge svg { width: 58px; height: 58px; }
.gauge span { position: absolute; inset: 0; display: flex; align-items: baseline; justify-content: center; font: 300 24px/56px "Open Sans", sans-serif; color: #eee; }
.gauge small { font-size: 10px; }

.qr { position: absolute; right: 38px; bottom: 42px; width: 218px; }
#qr { width: 218px; height: 218px; background: #fff; }
.qr-logo { position: absolute; left: 84px; top: 85px; width: 50px; height: 50px; }
.qr p { font: 900 20px/30px "Noto Sans CJK SC", sans-serif; color: #fff; white-space: nowrap; margin-left: -1px; }
```

FILE: qr.js
```js
// one string per row, 1 = dark module
const rows = [
  '1111111011001000100111000111101111111',
  '1000001011000100010001111111101000001',
  '1011101000000000101101000011101011101',
  '1011101010011100001110011111101011101',
  '1011101011100000111011111101101011101',
  '1000001011101001011100111110101000001',
  '1111111010101010101010101010101111111',
  '0000000000001101111100100100000000000',
  '0001001000000010111100000111100111011',
  '0010100000100110111100110110010001111',
  '1101011111001000101010111001011000001',
  '1110100110100011110010011100100110001',
  '1110001110001001100010101110010001001',
  '1101110001101000000000011100101101010',
  '1000111001100100000000010001110110011',
  '1011111110010000000000000111000110101',
  '0011110110110000000000011100101011001',
  '0101110101110000000000001100101111010',
  '0011010111101000000000000100111101101',
  '0001101010111000000000001101101111001',
  '0000101101011000000000000001101111011',
  '0000010101001100000000011001000111011',
  '1000111110010000000000001101011010011',
  '0000011010001111110011010101110011001',
  '0100000000001111111011011001011101101',
  '0000101010001111101001111001011010110',
  '1000110100101111011001011111011001101',
  '0111111011010101111010110101101111001',
  '1011011000010101010111001111111111011',
  '0000000010000001001000100101100010110',
  '1111111001010001010100101000101010011',
  '1000001000101101110010011101100010101',
  '1011101001110101110101111010111111011',
  '1011101010011000101100101101011010101',
  '1011101001110101110100110100100010110',
  '1000001001110100110110001010100010011',
  '1111111001111011010000101001111100110'
];

const svg = document.getElementById('qr');
let d = '';
rows.forEach((row, y) => {
  [...row].forEach((cell, x) => {
    if (cell === '1') d += `M${x} ${y}h1v1h-1z`;
  });
});
const path = document.createElementNS('http://www.w3.org/2000/svg', 'path');
path.setAttribute('d', d);
svg.appendChild(path);
```
